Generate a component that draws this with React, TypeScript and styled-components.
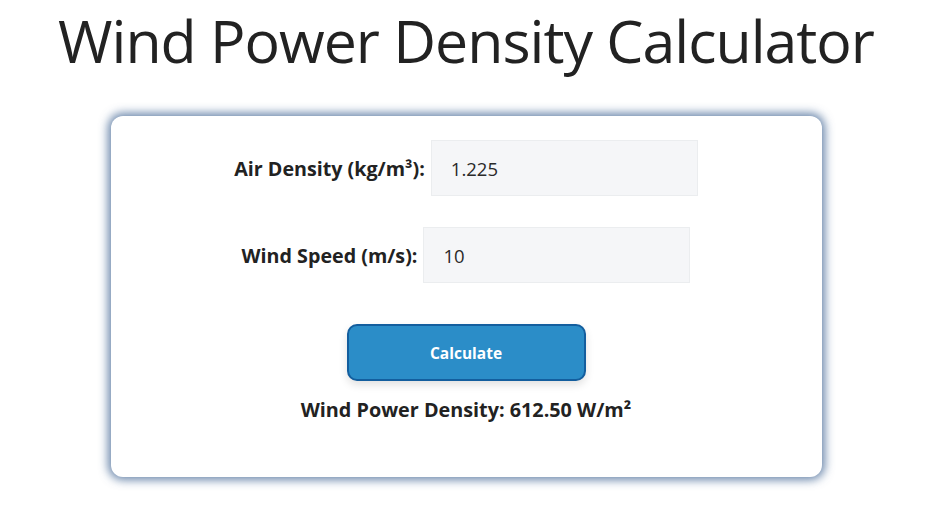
import styled, { createGlobalStyle } from 'styled-components';

const GlobalStyle = createGlobalStyle`
  body {
    margin: 0;
    background: #ffffff;
    font-family: 'Open Sans', 'Noto Sans', sans-serif;
    color: #222222;
  }
`;

const Page = styled.main`
  display: flex;
  flex-direction: column;
  align-items: center;
  width: 932px;
  height: 522px;
  overflow: hidden;
`;

const Title = styled.h1`
  margin: 11px 0 0 0;
  font-size: 59px;
  font-weight: 400;
  line-height: 1;
  color: #222222;
  letter-spacing: -1px;
  white-space: nowrap;
`;

const Card = styled.section`
  margin-top: 46px;
  width: 711px;
  height: 361px;
  box-sizing: border-box;
  background: #ffffff;
  border-radius: 12px;
  box-shadow: 0 0 10px 3px rgba(70, 105, 150, 0.8);
  display: flex;
  flex-direction: column;
  align-items: center;
  padding-top: 24px;
`;

const Row = styled.div`
  display: flex;
  align-items: center;
  gap: 6px;
  margin-bottom: 31px;
`;

const Label = styled.label`
  font-size: 19.7px;
  font-weight: 700;
  color: #222222;
`;

const Input = styled.input`
  width: 267px;
  height: 56px;
  box-sizing: border-box;
  padding: 0 19px;
  border: 1px solid #ebedef;
  background: #f5f6f8;
  font-family: inherit;
  font-size: 18.5px;
  color: #2a2a2a;
  outline: none;
`;

const Button = styled.button`
  margin-top: 10px;
  width: 239px;
  height: 57px;
  box-sizing: border-box;
  border: 2px solid #135e9e;
  border-radius: 10px;
  background: #2b8dc8;
  color: #ffffff;
  font-family: inherit;
  font-size: 15.5px;
  font-weight: 700;
  box-shadow: 0 4px 8px rgba(0, 0, 0, 0.12);
  cursor: pointer;
`;

const Result = styled.p`
  margin: 15px 0 0 0;
  font-size: 19.8px;
  font-weight: 700;
  color: #222222;
`;

const App = (): JSX.Element => {
  const density = 1.225;
  const speed = 10;
  const power = 0.5 * density * speed ** 3;

  return (
    <Page>
      <GlobalStyle />
      <Title>Wind Power Density Calculator</Title>
      <Card>
        <Row>
          <Label htmlFor="density">Air Density (kg/m³):</Label>
          <Input id="density" defaultValue="1.225" />
        </Row>
        <Row>
          <Label htmlFor="speed">Wind Speed (m/s):</Label>
          <Input id="speed" defaultValue="10" />
        </Row>
        <Button>Calculate</Button>
        <Result>Wind Power Density: {power.toFixed(2)} W/m²</Result>
      </Card>
    </Page>
  );
};

export default App;
